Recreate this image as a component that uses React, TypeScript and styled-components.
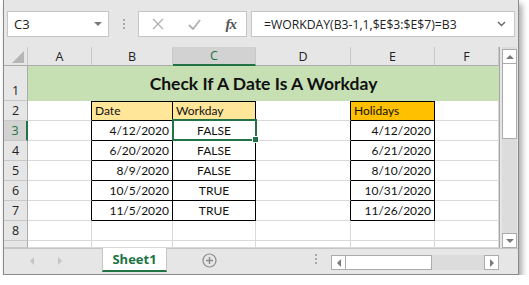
import React from 'react';
import styled, { createGlobalStyle } from 'styled-components';

const GREEN = '#217346';
const GRID = '#d9d9d9';
const HEAD_LINE = '#c8c8c8';

const GlobalStyle = createGlobalStyle`
  html, body { margin: 0; padding: 0; background: #ffffff; }
  body { font-family: 'Open Sans', 'Liberation Sans', sans-serif; }
`;

const Window = styled.div`
  box-sizing: border-box;
  margin-left: 3px;
  width: 516px;
  height: 275px;
  border: 1px solid #8a8a8a;
  border-top: none;
  background: #e6e6e6;
  box-shadow: 3px 4px 6px rgba(0, 0, 0, 0.35);
  display: flex;
  flex-direction: column;
  overflow: hidden;
`;

const FormulaBar = styled.div`
  box-sizing: border-box;
  height: 47px;
  padding: 11px 0 0 3px;
  display: flex;
  align-items: flex-start;
`;

const Box = styled.div`
  box-sizing: border-box;
  height: 26px;
  background: #fff;
  border: 1px solid #c6c6c6;
  display: flex;
  align-items: center;
`;

const NameBox = styled(Box)`
  width: 102px;
  padding: 0 6px 0 6px;
  justify-content: space-between;
  font-size: 13px;
  color: #222;
`;

const Grip = styled.div`
  margin: 8px 13px 0 14px;
  display: flex;
  flex-direction: column;
  gap: 2px;
  span {
    width: 2px;
    height: 2px;
    background: #a8a8a8;
  }
`;

const ButtonBox = styled(Box)`
  width: 109px;
  padding: 0 10px 0 13px;
  justify-content: space-between;
`;

const Fx = styled.span`
  font-family: 'Liberation Serif', serif;
  font-style: italic;
  font-weight: bold;
  font-size: 15px;
  color: #555;
  letter-spacing: -1px;
`;

const FormulaInput = styled(Box)`
  margin-left: 4px;
  width: 264px;
  padding: 0 8px 0 12px;
  justify-content: space-between;
  font-size: 12.2px;
  color: #222;
`;

const Main = styled.div`
  display: flex;
  height: 201px;
`;

const Sheet = styled.div`
  display: grid;
  grid-template-columns: 24px 64px 81px 83px 95px 84px 64px;
  grid-template-rows: 19px 35px repeat(7, 20px) 7px;
  border-right: 1px solid #a6a6a6;
  background: #fff;
  overflow: hidden;
`;

const Corner = styled.div`
  box-sizing: border-box;
  background: #e6e6e6;
  border-right: 1px solid ${HEAD_LINE};
  border-bottom: 1px solid #ababab;
  display: flex;
  align-items: flex-end;
  justify-content: flex-end;
  padding: 0 3px 2px 0;
`;

const ColHead = styled.div<{ $active?: boolean }>`
  box-sizing: border-box;
  background: ${(p) => (p.$active ? '#d2d2d2' : '#e6e6e6')};
  border-right: 1px solid ${HEAD_LINE};
  border-bottom: ${(p) => (p.$active ? `2px solid ${GREEN}` : '1px solid #ababab')};
  color: ${(p) => (p.$active ? GREEN : '#222')};
  font-size: 12.5px;
  display: flex;
  align-items: center;
  justify-content: center;
`;

const RowHead = styled.div<{ $active?: boolean }>`
  box-sizing: border-box;
  background: ${(p) => (p.$active ? '#d2d2d2' : '#e6e6e6')};
  border-right: ${(p) => (p.$active ? `2px solid ${GREEN}` : '1px solid #ababab')};
  border-bottom: 1px solid ${HEAD_LINE};
  color: ${(p) => (p.$active ? GREEN : '#222')};
  font-size: 12.5px;
  line-height: 16px;
  display: flex;
  align-items: flex-end;
  justify-content: center;
  padding-bottom: 1px;
`;

const Title = styled.div`
  grid-column: 2 / span 6;
  background: #c6e0b4;
  font-family: Lato, 'Liberation Sans', sans-serif;
  font-weight: bold;
  font-size: 17.5px;
  color: #111;
  display: flex;
  align-items: flex-end;
  justify-content: center;
  padding-bottom: 7px;
  box-sizing: border-box;
`;

const Cell = styled.div<{
  $align: string;
  $fill?: string;
  $right: string;
  $bottom: string;
  $top?: boolean;
}>`
  position: relative;
  box-sizing: border-box;
  background: ${(p) => p.$fill || '#fff'};
  border-right: 1px solid ${(p) => p.$right};
  border-bottom: 1px solid ${(p) => p.$bottom};
  border-top: ${(p) => (p.$top ? '1px solid #000' : 'none')};
  font-family: Lato, 'Liberation Sans', sans-serif;
  font-size: 12px;
  color: #111;
  display: flex;
  align-items: flex-end;
  justify-content: ${(p) => p.$align};
  padding: 0 3px 2px 3px;
  white-space: nowrap;
`;

const Selection = styled.span`
  position: absolute;
  z-index: 2;
  top: -2px;
  left: -1px;
  right: -2px;
  bottom: -1px;
  border: 2px solid ${GREEN};
  pointer-events: none;
  &::after {
    content: '';
    position: absolute;
    right: -4px;
    bottom: -4px;
    width: 5px;
    height: 5px;
    background: ${GREEN};
    border: 1px solid #fff;
  }
`;

const VScroll = styled.div`
  margin-left: 2px;
  width: 15px;
  padding-top: 2px;
  display: flex;
  flex-direction: column;
  background: #dcdcdc;
`;

const ArrowBtn = styled.div`
  box-sizing: border-box;
  width: 15px;
  height: 15px;
  background: #fff;
  border: 1px solid #ababab;
  display: flex;
  align-items: center;
  justify-content: center;
  flex-shrink: 0;
`;

const Thumb = styled.div<{ $vertical?: boolean }>`
  box-sizing: border-box;
  background: #fff;
  border: 1px solid #ababab;
  flex-shrink: 0;
  ${(p) => (p.$vertical ? 'height: 76px; margin-top: -1px;' : 'width: 87px; margin-left: -1px;')}
`;

const Spacer = styled.div`
  flex: 1;
`;

const TabBar = styled.div`
  box-sizing: border-box;
  height: 26px;
  border-top: 1px solid #c6c6c6;
  display: flex;
  align-items: flex-start;
`;

const Nav = styled.div`
  width: 98px;
  height: 24px;
  display: flex;
  align-items: center;
  gap: 22px;
  padding-left: 25px;
  box-sizing: border-box;
`;

const Tab = styled.div`
  box-sizing: border-box;
  width: 65px;
  height: 24px;
  margin-top: -1px;
  background: #fff;
  border-left: 1px solid #c6c6c6;
  border-right: 1px solid #c6c6c6;
  border-bottom: 2px solid ${GREEN};
  color: ${GREEN};
  font-weight: bold;
  font-size: 13px;
  display: flex;
  align-items: center;
  justify-content: center;
`;

const AddSheet = styled.div`
  margin: 4px 0 0 35px;
  width: 15px;
  height: 15px;
  display: flex;
`;

const TabGrip = styled(Grip)`
  margin: 5px 14px 0 98px;
`;

const HScroll = styled.div`
  margin-top: 6px;
  width: 168px;
  height: 15px;
  display: flex;
  background: #dcdcdc;
`;

type CellData = { text: string; align: string; fill?: string };

const COLS = ['A', 'B', 'C', 'D', 'E', 'F'];

const data: Record<number, Record<string, CellData>> = {
  2: {
    B: { text: 'Date', align: 'flex-start', fill: '#ffe699' },
    C: { text: 'Workday', align: 'flex-start', fill: '#ffe699' },
    E: { text: 'Holidays', align: 'flex-start', fill: '#ffc000' },
  },
  3: {
    B: { text: '4/12/2020', align: 'flex-end' },
    C: { text: 'FALSE', align: 'center' },
    E: { text: '4/12/2020', align: 'flex-end' },
  },
  4: {
    B: { text: '6/20/2020', align: 'flex-end' },
    C: { text: 'FALSE', align: 'center' },
    E: { text: '6/21/2020', align: 'flex-end' },
  },
  5: {
    B: { text: '8/9/2020', align: 'flex-end' },
    C: { text: 'FALSE', align: 'center' },
    E: { text: '8/10/2020', align: 'flex-end' },
  },
  6: {
    B: { text: '10/5/2020', align: 'flex-end' },
    C: { text: 'TRUE', align: 'center' },
    E: { text: '10/31/2020', align: 'flex-end' },
  },
  7: {
    B: { text: '11/5/2020', align: 'flex-end' },
    C: { text: 'TRUE', align: 'center' },
    E: { text: '11/26/2020', align: 'flex-end' },
  },
};

const inBox = (r: number, c: number) =>
  r >= 2 && r <= 7 && (COLS[c] === 'B' || COLS[c] === 'C' || COLS[c] === 'E');

function Tri({ dir, color = '#c4c4c4' }: { dir: 'l' | 'r' | 'u' | 'd'; color?: string }) {
  const pts = {
    l: '5,0 5,8 1,4',
    r: '1,0 1,8 5,4',
    u: '0,5 8,5 4,1',
    d: '0,1 8,1 4,5',
  }[dir];
  const wide = dir === 'u' || dir === 'd';
  return (
    <svg width={wide ? 8 : 6} height={wide ? 6 : 8}>
      <polygon points={pts} fill={color} />
    </svg>
  );
}

export default function App() {
  const rows = [2, 3, 4, 5, 6, 7, 8, 9];
  return (
    <>
      <GlobalStyle />
      <Window>
        <FormulaBar>
          <NameBox>
            <span>C3</span>
            <Tri dir="d" color="#7a7a7a" />
          </NameBox>
          <Grip>
            <span />
            <span />
            <span />
          </Grip>
          <ButtonBox>
            <svg width="12" height="12">
              <path d="M1 1 L11 11 M11 1 L1 11" stroke="#b3b3b3" strokeWidth="1.4" />
            </svg>
            <svg width="13" height="11">
              <path d="M1 6 L5 10 L12 1" stroke="#b3b3b3" strokeWidth="2" fill="none" />
            </svg>
            <Fx>fx</Fx>
          </ButtonBox>
          <FormulaInput>
            <span>=WORKDAY(B3-1,1,$E$3:$E$7)=B3</span>
            <svg width="9" height="6">
              <path d="M1 1 L4.5 4.5 L8 1" stroke="#666" strokeWidth="1.4" fill="none" />
            </svg>
          </FormulaInput>
        </FormulaBar>
        <Main>
          <Sheet>
            <Corner>
              <svg width="12" height="12">
                <polygon points="12,0 12,12 0,12" fill="#b5b5b5" />
              </svg>
            </Corner>
            {COLS.map((c) => (
              <ColHead key={c} $active={c === 'C'}>
                {c}
              </ColHead>
            ))}
            <RowHead>1</RowHead>
            <Title>Check If A Date Is A Workday</Title>
            {rows.map((r) => (
              <React.Fragment key={r}>
                <RowHead $active={r === 3}>{r <= 8 ? r : ''}</RowHead>
                {COLS.map((c, ci) => {
                  const d = data[r]?.[c];
                  const right = inBox(r, ci) || inBox(r, ci + 1) ? '#000' : GRID;
                  const bottom = inBox(r, ci) || inBox(r + 1, ci) ? '#000' : GRID;
                  return (
                    <Cell
                      key={c}
                      $align={d?.align ?? 'flex-start'}
                      $fill={d?.fill}
                      $right={right}
                      $bottom={bottom}
                      $top={r === 2 && inBox(r, ci)}
                    >
                      {d?.text}
                      {r === 3 && c === 'C' && <Selection />}
                    </Cell>
                  );
                })}
              </React.Fragment>
            ))}
          </Sheet>
          <VScroll>
            <ArrowBtn>
              <Tri dir="u" color="#7a7a7a" />
            </ArrowBtn>
            <Thumb $vertical />
            <Spacer />
            <ArrowBtn>
              <Tri dir="d" color="#7a7a7a" />
            </ArrowBtn>
          </VScroll>
        </Main>
        <TabBar>
          <Nav>
            <Tri dir="l" />
            <Tri dir="r" />
          </Nav>
          <Tab>Sheet1</Tab>
          <AddSheet>
            <svg width="15" height="15">
              <circle cx="7.5" cy="7.5" r="6.5" stroke="#8a8a8a" strokeWidth="1.2" fill="none" />
              <path d="M7.5 4 V11 M4 7.5 H11" stroke="#8a8a8a" strokeWidth="1.4" />
            </svg>
          </AddSheet>
          <TabGrip>
            <span />
            <span />
            <span />
          </TabGrip>
          <HScroll>
            <ArrowBtn>
              <Tri dir="l" color="#7a7a7a" />
            </ArrowBtn>
            <Thumb />
            <Spacer />
            <ArrowBtn>
              <Tri dir="r" color="#7a7a7a" />
            </ArrowBtn>
          </HScroll>
        </TabBar>
      </Window>
    </>
  );
}
